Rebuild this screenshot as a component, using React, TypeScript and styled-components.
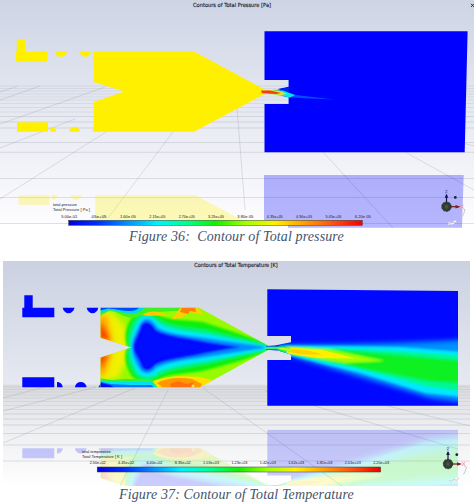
import React from 'react';
import styled, { createGlobalStyle } from 'styled-components';

const GlobalStyle = createGlobalStyle`
  body {
    margin: 0;
    background: #ffffff;
    overflow: hidden;
  }
`;

const Page = styled.main`
  display: flex;
  flex-direction: column;
  width: 474px;
  height: 502px;
  overflow: hidden;
  background: #ffffff;
`;

const Figure = styled.figure<{ $height: number; $inset?: number }>`
  display: flex;
  flex-direction: column;
  flex: none;
  height: ${(p) => p.$height}px;
  margin: 0;
  padding-left: ${(p) => p.$inset || 0}px;
`;

const Plot = styled.svg`
  display: block;
  flex: none;
`;

const Caption = styled.figcaption<{ $indent: number; $spacing: number }>`
  padding-left: ${(p) => p.$indent}px;
  font: italic 14px/18px 'Liberation Serif', serif;
  letter-spacing: ${(p) => p.$spacing}px;
  color: #44546a;
  white-space: pre;
`;

const PlotTitle = styled.text`
  font: 5.6px 'DejaVu Sans', sans-serif;
  fill: #20222c;
  stroke: #20222c;
  stroke-width: 0.15px;
`;

const Tick = styled.text`
  font: 4.2px 'Liberation Sans', sans-serif;
  fill: #16161c;
  text-anchor: middle;
`;

const FieldName = styled.text`
  font: 4.3px 'Liberation Sans', sans-serif;
  fill: #16161c;
`;

const GridLine = styled.path<{ $faint?: boolean }>`
  fill: none;
  stroke: #9a9dad;
  stroke-width: 0.6px;
  opacity: ${(p) => (p.$faint ? 0.3 : 0.5)};
`;

const rainbow = ['#0000e6', '#0030ff', '#0090ff', '#00f0ff', '#00ff90', '#10f000', '#a0ff00', '#fff000', '#ffa000', '#ff5010', '#f00000'];

function Scale({ id, x, y, width, labels }: { id: string; x: number; y: number; width: number; labels: string[] }): JSX.Element {
  const step = width / (labels.length - 1);
  return (
    <g>
      <linearGradient id={id}>
        {rainbow.map((c, i) => (
          <stop key={c} offset={i / (rainbow.length - 1)} stopColor={c} />
        ))}
      </linearGradient>
      <rect x={x} y={y} width={width} height={5} fill={`url(#${id})`} stroke='#30402c' strokeWidth='0.5' />
      {labels.map((label, i) => (
        <Tick key={label} x={x + 0.5 + i * step} y={y - 2.6} textLength={16} lengthAdjust='spacingAndGlyphs'>
          {label}
        </Tick>
      ))}
    </g>
  );
}

function Triad({ x, y }: { x: number; y: number }): JSX.Element {
  return (
    <g transform={`translate(${x} ${y})`}>
      <path d='M0 -3V-12' stroke='#15154c' strokeWidth='1.2' />
      <path d='M-1.8 -9L0 -13L1.8 -9Z' fill='#15154c' />
      <path d='M-1.2 -16.3H1L-1.2 -14H1' stroke='#5058c8' strokeWidth='0.6' fill='none' />
      <path d='M4 0H12' stroke='#701c20' strokeWidth='1.2' />
      <path d='M9 -1.8L14 0L9 1.8Z' fill='#8c1820' />
      <path d='M14 -2.2L17 1.5M17 -2L14 2' stroke='#f09098' strokeWidth='0.8' />
      <circle r='4.8' fill='#343a34' stroke='#202420' strokeWidth='0.7' strokeDasharray='2 1' />
      <circle r='2' fill='#44543e' />
      <circle cx='8.8' cy='-9.3' r='1.4' fill='#17253c' />
      <path d='M15.8 1.5C19 3 18.5 6 15.5 10.5' fill='none' stroke='#ffffff' strokeWidth='1.3' />
      <path d='M15.8 1.5L18.4 3L17.3 7L15.5 10.5' fill='none' stroke='#8e8e98' strokeWidth='0.5' />
      <path d='M10 14.5L6 16.5L1.5 17' fill='none' stroke='#ffffff' strokeWidth='2' />
      <path d='M11 14L8.5 16L5 15.8L4 17.5L1 16.5' fill='none' stroke='#8e8e98' strokeWidth='0.5' />
    </g>
  );
}

const pressureLevels = ['5.00e-01', '.05e+05', '1.60e 05', '2.15e+05', '2.70e+05', '3.25e+05', '3.80e 05', '4.35e+05', '4.90e+05', '5.45e+05', '6.20e 05'];
const temperatureLevels = ['2.50e+02', '4.45e+02', '6.40e+02', '8.35e+02', '1.03e+03', '1.23e+03', '1.42e+03', '1.62e+03', '1.81e+03', '2.01e+03', '2.20e+03'];

function PressureBody(): JSX.Element {
  return (
    <g>
      <g fill='#fff000'>
        <path d='M16 61.5V51.5H16.8V39.2H25.2V51.5H47.3V61.5Z' />
        <path d='M55 51.5H67C66 58.5 56 58.5 55 51.5Z' />
        <path d='M79.5 51.5H91C90 58.5 80.5 58.5 79.5 51.5Z' />
        <path d='M17 122.3H48V131.7H17Z' />
        <path d='M50.5 127C54 127 56 129 56 131.7H50.5Z' />
        <path d='M69 131.7C70 125.2 79 125.2 80 131.7Z' />
        <path d='M93.7 51.5H194L265.5 90V93.6L194 131.8H92.2L93.7 129V102L124.5 91.5L93.7 82Z' />
      </g>
      <path d='M264.5 31.3H467.6L464.7 152.2H264.5V104H288.6V97.5L266 92.8V91.5L288.6 86.8V80H264.5Z' fill='#0000ff' />
      <path d='M264 90.8L279 88.8L288.6 93V97.5L264 93.5Z' fill='#dfe2ec' />
      <g filter='url(#soft1)'>
        <path d='M272 91L289 87.3V97L281 95Z' fill='#0020f0' />
        <path d='M284 93L300 95.5L334 99.5L300 98L284 96.5Z' fill='#0050ff' />
        <path d='M272 90.2L283 90.6L295 95L290 97.4L279 95.3L270 93.5Z' fill='#00e8e8' />
        <path d='M266 90L279 90.6L287 94L281 94.9L268 94Z' fill='#e8e020' />
        <path d='M261 90.6L270 90.6L281 93L276 94L262 93.2Z' fill='#f04010' />
      </g>
    </g>
  );
}

function TotalPressurePlot(): JSX.Element {
  return (
    <Plot width='474' height='228' viewBox='0 0 474 228'>
      <defs>
        <linearGradient id='sky1' x1='0' y1='0' x2='0' y2='1'>
          <stop offset='0' stopColor='#cdd4e4' />
          <stop offset='0.37' stopColor='#e0e4ee' />
          <stop offset='0.7' stopColor='#f0f1f6' />
          <stop offset='1' stopColor='#fdfdff' />
        </linearGradient>
        <filter id='soft1' x='-20%' y='-50%' width='140%' height='200%'>
          <feGaussianBlur stdDeviation='0.7' />
        </filter>
      </defs>
      <rect width='474' height='224' fill='url(#sky1)' />
      <GridLine $faint d='M0 86H474M0 88.5H474M0 91H474M0 94H474M0 97H474M0 100H474M0 103.5H474M0 107.5H474M0 112H474' />
      <GridLine d='M0 116.5H474M0 122H474M0 128H474M0 142.5H474M0 152.3H474M0 178.5H474M0 197.5H474M0 223.5H474' />
      <GridLine d='M0 100L40 86M0 124L105 87M0 148L75 119M0 199L106 132M108 218L173 132M237 107L245 210M323 152L393 228M405 152L474 190M462 143L474 146M0 92L18 86' />
      <g opacity='0.28'>
        <g transform='matrix(1 0 0 -1 1.5 327)'>
          <path d='M17 122.3H48V131.7H17ZM50.5 127C54 127 56 129 56 131.7H50.5ZM69 131.7C70 125.2 79 125.2 80 131.7ZM93.7 104H246L194 131.8H93.7Z' fill='#fff000' />
        </g>
        <path d='M264 175H463.7L462 227.7H288V223H264Z' fill='#0000ff' />
      </g>
      <PressureBody />
      <PlotTitle x='193' y='7.4' textLength='78' lengthAdjust='spacingAndGlyphs'>
        Contours of Total Pressure [Pa]
      </PlotTitle>
      <path d='M471 3.8L474 7M474 3.8L471 7' stroke='#20222c' strokeWidth='0.9' />
      <FieldName x='53' y='205.7' textLength='24' lengthAdjust='spacingAndGlyphs'>total-pressure</FieldName>
      <FieldName x='53' y='210.5' textLength='37' lengthAdjust='spacingAndGlyphs'>Total Pressure [ Pa ]</FieldName>
      <Scale id='bar1' x={68.7} y={220.3} width={293.6} labels={pressureLevels} />
      <Triad x={446.5} y={206.7} />
    </Plot>
  );
}

function CombustionField(): JSX.Element {
  return (
    <g clipPath='url(#chamber)'>
      <rect x='98' y='305' width='175' height='85' fill='#98fa00' />
      <g filter='url(#soft3)'>
        {/* hot gas next to the injector */}
        <path d='M96 310L112 312L124 325L128 345L131 347L127 360L118 378L96 381Z' fill='#f0f000' />
        <path d='M98 314L108 316L113 342L98 342ZM98 352L113 352L106 374L98 378Z' fill='#ffb000' />
        <path d='M98 320L104 326L112 342L98 339ZM98 355L110 353L103 366L98 370Z' fill='#ff3800' />
      </g>
      <g filter='url(#soft2)'>
        {/* flame envelope, from the outer layer to the cold core */}
        <path d='M127 347C123 334 128 319 136 314C146 308 156 314 163 317C176 321 190 320 203 322L240 334L272 345V350L240 361L203 371C185 374 168 374 160 379C152 384 136 383 131 375C126 366 123 357 127 347Z' fill='#10f010' />
        <path d='M129 347C127 335 132 322 138 317C146 311 155 317 161 321C174 327 190 328 205 330L272 346V349L205 364C188 367 170 369 159 375C150 382 138 380 134 372C128 362 127 353 129 347Z' fill='#00f090' />
        <path d='M131 347C130 337 136 324 140 319C147 313 155 319 159 324C172 331 190 332 210 335L270 346.5V348.5L210 360C188 364 170 365 157 372C150 379 140 377 137 370C131 360 130 352 131 347Z' fill='#00e8ff' />
        <path d='M132 347C132 338 138 327 141 322C147 315 153 320 158 328C170 334 185 335 210 338.5L264 346.5V348L210 356.5C188 360 170 361 156 368C150 376 142 374 139 368C133 359 132 352 132 347Z' fill='#0090ff' />
        <path d='M133 347C133 340 138 336 141 325C146 318 152 323 156 330C168 336 185 337 208 342L240 347L208 353C185 358 168 359 155 365C149 373 143 371 141 366C138 356 133 354 133 347Z' fill='#0008ff' />
      </g>
      <path d='M138 345C142 337 143 328 147 325C152 327 153 335 166 339L205 346L166 356C154 360 153 366 148 368C143 366 143 358 138 345Z' fill='#0008ff' filter='url(#soft2)' />
      <g filter='url(#soft1)'>
        {/* wall layers */}
        <path d='M98 304H194L180 311C160 311 148 313 137 317C128 321 119 311 109 311L98 317Z' fill='#40f020' />
        <path d='M98 304H150L139 312C130 316 120 311 109 310L98 314Z' fill='#00d8f0' />
        <path d='M98 304H144L136 310C128 313 119 309 108 308.5L98 311Z' fill='#0048ff' />
        <path d='M142 315C152 309 161 312 167 316L158 315.5L148 316Z' fill='#ffc800' />
        <path d='M172 319L181 307H197L204 315L190 312L181 318Z' fill='#ffd000' />
        <path d='M180 312L182 307H195L196 312L190 311L188 314Z' fill='#ff8010' />
        <path d='M98 378L112 380L126 379L150 379L160 390H98Z' fill='#30f040' />
        <path d='M98 380L112 382L130 382L152 382L159 390H98Z' fill='#00e0f0' />
        <path d='M98 381L110 384L130 385L152 385L155 390H98Z' fill='#0070ff' />
        <path d='M98 382L110 385L118 390H98Z' fill='#0010f0' />
        <path d='M153 381C164 377 178 375 200 377L212 380L203 390H160Z' fill='#ffe000' />
        <path d='M157 383C166 378 178 377 192 379L202 384L199 390H166Z' fill='#ff9800' />
        <path d='M170 384L178 381L187 384L194 382L190 390H172Z' fill='#ff7010' />
        <circle cx='193' cy='386' r='1.5' fill='#ffe060' />
      </g>
    </g>
  );
}

function TemperatureBody(): JSX.Element {
  return (
    <g>
      <g fill='#0008ff'>
        <path d='M22.3 317.3V307.7H24.3V295.3H32.7V307.7H54.3V317.3Z' />
        <path d='M62.7 307.7H74.5C73 315 64 315 62.7 307.7Z' />
        <path d='M86.7 307.7H98.3C97 315 88 315 86.7 307.7Z' />
        <path d='M22.3 377.3H54.3V387.3H22.3Z' />
        <path d='M57 382C60.5 382 62.5 384.5 62.7 387.3H57Z' />
        <path d='M74.8 387.3C76 380.3 85.5 380.3 86.7 387.3Z' />
        <path d='M98.5 387.3L100.6 383.5V387.3Z' />
      </g>
      <CombustionField />
      <g clipPath='url(#farfield)'>
        <rect x='264' y='286' width='200' height='122' fill='#0008ff' />
        <g filter='url(#soft3)'>
          <path d='M283 345L350 344L405 342.5L480 339V405L430 398L370 380L283 354Z' fill='#0090ff' />
        </g>
        <g filter='url(#soft2)'>
          <path d='M280 345.5L350 346L400 347L480 353V399L425 393L360 373L280 353Z' fill='#00e8ff' />
          <path d='M278 346L345 348.5L400 351L480 357V394L425 386L355 368L278 352Z' fill='#00f890' />
          <path d='M278 346.5L330 349L385 354L440 359L480 363V384L430 381L370 370L320 359L278 351Z' fill='#08f020' />
          <path d='M287 346.5L330 349.5L385 361L345 363L310 357L287 353Z' fill='#a0ff00' />
        </g>
        <g filter='url(#soft1)'>
          <path d='M287 347.5L320 349.5L356 358.5L318 358L287 353.5Z' fill='#fff000' />
          <path d='M288 348.5L308 350.5L323 354.5L304 354.5L288 352Z' fill='#ffd000' />
          <path d='M264 346.5H275L290 347.5V351L276 349.5H264Z' fill='#30f080' />
          <path d='M277 347.5L292 348.5V351.5L282 350Z' fill='#c0f810' />
        </g>
      </g>
    </g>
  );
}

function TotalTemperaturePlot(): JSX.Element {
  return (
    <Plot width='467' height='225' viewBox='3 261 467 225'>
      <defs>
        <linearGradient id='sky2' x1='0' y1='0' x2='0' y2='1'>
          <stop offset='0' stopColor='#cbd1e1' />
          <stop offset='1' stopColor='#e6e9f1' />
        </linearGradient>
        <linearGradient id='floor2' x1='0' y1='0' x2='0' y2='1'>
          <stop offset='0' stopColor='#d9dadd' />
          <stop offset='0.35' stopColor='#ebecef' />
          <stop offset='1' stopColor='#ffffff' />
        </linearGradient>
        <clipPath id='chamber'>
          <path d='M100.6 307.7H199L268 345.6V350L200 387.3H100.6V357.5L131.5 347.5L100.6 337.7Z' />
        </clipPath>
        <clipPath id='farfield'>
          <path d='M267.3 289.3L458 291V405.8H267.3V360H291V354.5L278 350.5L266 349.8V346L275 345.6L291 342.3V336H267.3Z' />
        </clipPath>
        <filter id='soft2' x='-20%' y='-30%' width='140%' height='160%'>
          <feGaussianBlur stdDeviation='1.3' />
        </filter>
        <filter id='soft3' x='-20%' y='-30%' width='140%' height='160%'>
          <feGaussianBlur stdDeviation='2.4' />
        </filter>
      </defs>
      <rect x='3' y='261' width='467' height='124' fill='url(#sky2)' />
      <rect x='3' y='384.7' width='467' height='102' fill='url(#floor2)' />
      <GridLine $faint d='M3 387H470M3 389.5H470M3 392H470M3 395H470M3 398H470M3 401.5H470M3 405.5H470M3 409.5H470' />
      <GridLine d='M3 414H470M3 419H470M3 425H470M3 433.5H470M3 445H470M3 461H470' />
      <GridLine d='M3 398L48 386M3 411L96 387M3 443L135 388M120 486L168 390M203 388L342 486M265 391L458 449M330 392L470 426' />
      <g transform='matrix(1 0 0 -1 0 835.5)' opacity='0.2'>
        <TemperatureBody />
      </g>
      <TemperatureBody />
      <PlotTitle x='194.3' y='267.3' textLength='83.5' lengthAdjust='spacingAndGlyphs'>
        Contours of Total Temperature [K]
      </PlotTitle>
      <FieldName x='82' y='453.2' textLength='29' lengthAdjust='spacingAndGlyphs'>total-temperature</FieldName>
      <FieldName x='82' y='457.8' textLength='40' lengthAdjust='spacingAndGlyphs'>Total Temperature [ K ]</FieldName>
      <Scale id='bar2' x={97.2} y={467} width={283.5} labels={temperatureLevels} />
      <Triad x={448} y={464} />
    </Plot>
  );
}

export default function App(): JSX.Element {
  return (
    <Page>
      <GlobalStyle />
      <Figure $height={261}>
        <TotalPressurePlot />
        <Caption $indent={129} $spacing={0.12}>Figure 36:  Contour of Total pressure</Caption>
      </Figure>
      <Figure $height={241} $inset={3}>
        <TotalTemperaturePlot />
        <Caption $indent={116} $spacing={0.12}>Figure 37: Contour of Total Temperature</Caption>
      </Figure>
    </Page>
  );
}
